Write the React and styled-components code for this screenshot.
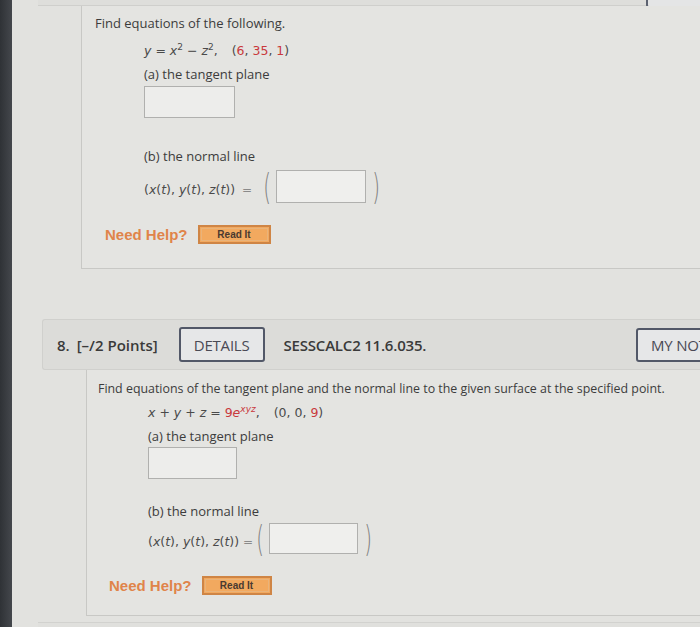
import styled, { createGlobalStyle } from "styled-components";

const GlobalStyle = createGlobalStyle`
  html, body {
    margin: 0;
    padding: 0;
    background: #e2e2df;
  }
  body {
    font-family: "Open Sans", "Liberation Sans", sans-serif;
    color: #3a3a3a;
    overflow: hidden;
  }
`;

const Page = styled.div`
  display: flex;
  width: 700px;
  height: 627px;
  overflow: hidden;
`;

const Strip = styled.div`
  width: 12px;
  flex: none;
  background: linear-gradient(90deg, #2f3236, #44474c);
`;

const Content = styled.div`
  flex: 1;
  display: flex;
  flex-direction: column;
  min-width: 0;
`;

const HeaderStub = styled.div`
  display: flex;
  height: 5px;
  margin-left: 26px;
  border-bottom: 1px solid #cfcfcc;
  background: #dededb;
`;

const NotesStub = styled.div`
  margin-left: auto;
  width: 52px;
  height: 9px;
  margin-top: -2px;
  border: 2px solid #5c6270;
  border-top: none;
  border-right: none;
  border-radius: 0 0 0 4px;
  background: #e4e5e6;
`;

const Body = styled.div`
  margin-left: ${(p) => p.$left}px;
  height: ${(p) => p.$height}px;
  padding: ${(p) => p.$top}px 0 0 ${(p) => p.$pad}px;
  box-sizing: border-box;
  border-left: 1px solid #c8c8c5;
  border-bottom: 1px solid #c8c8c5;
  background: #e4e4e1;
`;

const Prompt = styled.div`
  font-size: ${(p) => p.$size}px;
  line-height: 18px;
  color: #3c3c3c;
  white-space: nowrap;
`;

const Indent = styled.div`
  margin-left: ${(p) => p.$indent}px;
  display: flex;
  flex-direction: column;
`;

const Line = styled.div`
  margin-top: ${(p) => p.$mt}px;
  font-size: 13px;
  line-height: 18px;
  white-space: nowrap;
  color: #3c3c3c;
`;

const Eq = styled.span`
  font-family: "DejaVu Sans", Verdana, sans-serif;
  font-size: 12.5px;
  color: #4a4a4a;
`;

const V = styled.i`
  font-style: italic;
`;

const Red = styled.span`
  color: #c9393c;
`;

const Sup = styled.sup`
  font-size: 9px;
  line-height: 0;
  vertical-align: 5px;
`;

const Gap = styled.span`
  display: inline-block;
  width: ${(p) => p.$w}px;
`;

const AnswerBox = styled.div`
  margin-top: ${(p) => p.$mt}px;
  width: ${(p) => p.$w}px;
  height: ${(p) => p.$h}px;
  box-sizing: border-box;
  border: 1px solid #b0b0ae;
  background: #ededeb;
`;

const NormalRow = styled.div`
  margin-top: ${(p) => p.$mt}px;
  display: flex;
  align-items: center;
  height: ${(p) => p.$h}px;
`;

const Param = styled.span`
  font-family: "DejaVu Sans", Verdana, sans-serif;
  font-size: 12.5px;
  color: #4a4a4a;
  white-space: nowrap;
  margin-top: 6px;
`;

const Equals = styled.span`
  margin: 6px ${(p) => p.$after}px 0 ${(p) => p.$before}px;
  font-family: "DejaVu Sans", Verdana, sans-serif;
  font-size: 12px;
  color: #8a8a8a;
`;

const Paren = styled.span`
  font-family: "DejaVu Sans", sans-serif;
  font-weight: 200;
  font-size: 36px;
  line-height: 32px;
  color: #7e7e7e;
  transform: scaleX(0.55);
`;

const InlineBox = styled.div`
  width: ${(p) => p.$w}px;
  height: ${(p) => p.$h}px;
  margin: 0 3px 0 2px;
  box-sizing: border-box;
  border: 1px solid #b0b0ae;
  background: #efefed;
`;

const HelpRow = styled.div`
  margin: ${(p) => p.$mt}px 0 0 ${(p) => p.$ml}px;
  display: flex;
  align-items: center;
  gap: 10px;
`;

const NeedHelp = styled.span`
  font-family: "Liberation Sans", Arial, sans-serif;
  font-weight: 700;
  font-size: 15px;
  color: #e0844a;
`;

const ReadIt = styled.button`
  width: ${(p) => p.$w}px;
  height: 19px;
  padding: 0;
  border: 2px solid #cf8545;
  outline: 1px solid #e9b37a;
  outline-offset: -4px;
  background: #f2a95f;
  font-family: "Liberation Sans", Arial, sans-serif;
  font-weight: 700;
  font-size: 10px;
  color: #4a3a30;
`;

const QHeader = styled.div`
  margin: 50px 0 0 30px;
  height: 51px;
  box-sizing: border-box;
  display: flex;
  align-items: center;
  padding-left: 14px;
  border: 1px solid #d0d0cd;
  border-right: none;
  border-radius: 3px 0 0 3px;
  background: #dcdcd9;
  font-size: 15px;
  color: #3a3a3a;
`;

const QNum = styled.span`
  font-weight: 600;
  margin-right: 7px;
`;

const Points = styled.span`
  font-weight: 600;
  margin-right: 21px;
`;

const OutlineButton = styled.button`
  height: ${(p) => p.$h}px;
  padding: 0 13px;
  box-sizing: border-box;
  border: 2px solid #525868;
  border-radius: 3px;
  background: #e6e7e8;
  font-family: "Open Sans", sans-serif;
  font-size: 15px;
  color: #4a4a55;
  letter-spacing: -0.2px;
  white-space: nowrap;
`;

const Code = styled.span`
  margin-left: 19px;
  font-weight: 600;
  letter-spacing: -0.2px;
`;

const RightBtn = styled(OutlineButton)`
  margin-left: auto;
  margin-right: -38px;
  border-radius: 3px;
`;

const Footer = styled.div`
  margin-left: 26px;
  margin-top: 6px;
  border-top: 1px solid #d2d2cf;
  flex: 1;
  background: #e0e0dd;
`;

const Question7 = () => (
  <Body $left={69} $height={263} $top={8} $pad={13}>
    <Prompt $size={13}>Find equations of the following.</Prompt>
    <Indent $indent={49}>
      <Line $mt={9}>
        <Eq>
          <V>y</V> = <V>x</V>
          <Sup>2</Sup> − <V>z</V>
          <Sup>2</Sup>,<Gap $w={14} />(<Red>6</Red>, <Red>35</Red>, <Red>1</Red>)
        </Eq>
      </Line>
      <Line $mt={5}>(a) the tangent plane</Line>
      <AnswerBox $mt={3} $w={91} $h={32} />
      <Line $mt={29}>(b) the normal line</Line>
      <NormalRow $mt={5} $h={33}>
        <Param>
          (<V>x</V>(<V>t</V>), <V>y</V>(<V>t</V>), <V>z</V>(<V>t</V>))
        </Param>
        <Equals $before={7} $after={8}>=</Equals>
        <Paren>(</Paren>
        <InlineBox $w={90} $h={33} />
        <Paren>)</Paren>
      </NormalRow>
    </Indent>
    <HelpRow $mt={22} $ml={10}>
      <NeedHelp>Need Help?</NeedHelp>
      <ReadIt $w={73}>Read It</ReadIt>
    </HelpRow>
  </Body>
);

const Question8 = () => (
  <Body $left={74} $height={246} $top={10} $pad={11}>
    <Prompt $size={12.4}>
      Find equations of the tangent plane and the normal line to the given surface at the specified point.
    </Prompt>
    <Indent $indent={50}>
      <Line $mt={5}>
        <Eq>
          <V>x</V> + <V>y</V> + <V>z</V> ={" "}
          <Red>
            9<V>e</V>
            <Sup>
              <V>xyz</V>
            </Sup>
          </Red>
          ,<Gap $w={14} />(0, 0, <Red>9</Red>)
        </Eq>
      </Line>
      <Line $mt={5}>(a) the tangent plane</Line>
      <AnswerBox $mt={2} $w={89} $h={32} />
      <Line $mt={23}>(b) the normal line</Line>
      <NormalRow $mt={3} $h={31}>
        <Param>
          (<V>x</V>(<V>t</V>), <V>y</V>(<V>t</V>), <V>z</V>(<V>t</V>))
        </Param>
        <Equals $before={4} $after={0}>=</Equals>
        <Paren>(</Paren>
        <InlineBox $w={89} $h={31} />
        <Paren>)</Paren>
      </NormalRow>
    </Indent>
    <HelpRow $mt={22} $ml={11}>
      <NeedHelp>Need Help?</NeedHelp>
      <ReadIt $w={70}>Read It</ReadIt>
    </HelpRow>
  </Body>
);

export default function App() {
  return (
    <>
      <GlobalStyle />
      <Page>
        <Strip />
        <Content>
          <HeaderStub>
            <NotesStub />
          </HeaderStub>
          <Question7 />
          <QHeader>
            <QNum>8.</QNum>
            <Points>[–/2 Points]</Points>
            <OutlineButton $h={35}>DETAILS</OutlineButton>
            <Code>SESSCALC2 11.6.035.</Code>
            <RightBtn $h={34}>MY NOTES</RightBtn>
          </QHeader>
          <Question8 />
          <Footer />
        </Content>
      </Page>
    </>
  );
}
